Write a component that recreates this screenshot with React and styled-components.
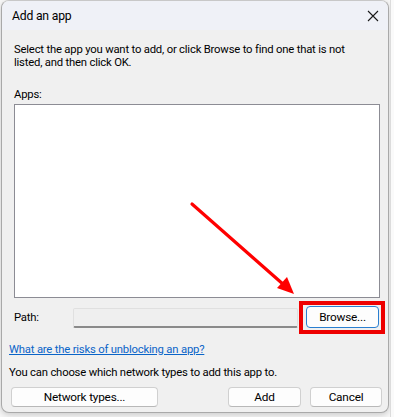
import React from "react";
import styled, { createGlobalStyle } from "styled-components";

const Global = createGlobalStyle`
  html, body { margin: 0; padding: 0; }
  body {
    width: 394px; height: 417px; overflow: hidden;
    background: #f7f7f7;
    font-family: Roboto, "Noto Sans", sans-serif;
    font-size: 11.3px; letter-spacing: -0.2px; color: #000;
  }
`;

const Page = styled.div`
  position: relative;
  width: 394px;
  height: 417px;
  padding-left: 1px;
  box-sizing: border-box;
`;

const Dialog = styled.div`
  width: 388px;
  height: 413px;
  box-sizing: border-box;
  border: 1px solid #a9a9a9;
  border-top-color: #c8c8c8;
  border-radius: 8px;
  background: #f0f0f0;
  box-shadow: 0 2px 6px rgba(0, 0, 0, 0.18);
  display: flex;
  flex-direction: column;
  overflow: hidden;
`;

const TitleBar = styled.div`
  height: 29px;
  flex: none;
  background: #eff1f7;
  display: flex;
  align-items: center;
  justify-content: space-between;
  padding: 0 3px 0 10px;
  font-size: 12.2px;
`;

const Close = styled.div`
  width: 24px;
  height: 24px;
  display: flex;
  align-items: center;
  justify-content: center;
`;

const Body = styled.div`
  display: flex;
  flex-direction: column;
  padding: 13px 0 0 7px;
  white-space: nowrap;
`;

const Intro = styled.div`
  padding-left: 5px;
  line-height: 13px;
`;

const Label = styled.div`
  padding-left: 5px;
  margin-top: ${(p) => p.$mt}px;
  line-height: 14px;
`;

const ListBox = styled.div`
  margin: 2px 0 0 5px;
  width: 366px;
  height: 194px;
  box-sizing: border-box;
  background: #fff;
  border: 1px solid #8c8c94;
`;

const PathRow = styled.div`
  display: flex;
  align-items: center;
  margin-top: 3px;
  padding-left: 5px;
  & > * { flex: none; }
`;

const PathLabel = styled.div`
  width: 59px;
`;

const PathInput = styled.div`
  width: 225px;
  height: 20px;
  box-sizing: border-box;
  background: #efefef;
  border: 1px solid #e0e0e0;
  border-bottom: 2px solid #8a8a8a;
  border-radius: 2px;
`;

const Highlight = styled.div`
  margin-left: 1px;
  border: 4px solid #ee0000;
  padding: 1px 2px 2px 3px;
  display: flex;
`;

const Button = styled.div`
  flex: none;
  width: ${(p) => p.$w}px;
  height: ${(p) => p.$h || 20}px;
  box-sizing: border-box;
  background: #fdfdfd;
  border: 1px solid ${(p) => (p.$primary ? "#2a7fd0" : "#d0d0d0")};
  border-bottom-color: ${(p) => (p.$primary ? "#2a7fd0" : "#b8b8b8")};
  border-radius: 4px;
  display: flex;
  align-items: center;
  justify-content: center;
  font-size: 11.8px;
`;

const Link = styled.a`
  margin-top: 8px;
  color: #0a64c8;
  text-decoration: underline;
  line-height: 16px;
  align-self: flex-start;
`;

const Note = styled.div`
  margin-top: 7px;
  line-height: 16px;
`;

const ButtonRow = styled.div`
  display: flex;
  margin-top: 6px;
  padding: 0 6px 0 2px;
`;

const Spacer = styled.div`
  flex: 1;
`;

const Gap = styled.div`
  width: 9px;
`;

const Arrow = styled.svg`
  position: absolute;
  left: 0;
  top: 0;
  pointer-events: none;
`;

const Edge = styled.div`
  position: absolute;
  right: 0;
  top: 0;
  width: 3px;
  height: 417px;
  background: #fafafa;
  border-left: 1px solid #dcdcdc;
`;

export default function App() {
  return (
    <Page>
      <Global />
      <Edge />
      <Dialog>
        <TitleBar>
          <span>Add an app</span>
          <Close>
            <svg width="12" height="12" viewBox="0 0 12 12">
              <path d="M1 1 L11 11 M11 1 L1 11" stroke="#1a1a1a" strokeWidth="1.1" />
            </svg>
          </Close>
        </TitleBar>
        <Body>
          <Intro>
            Select the app you want to add, or click Browse to find one that is not
            <br />
            listed, and then click OK.
          </Intro>
          <Label $mt={19}>Apps:</Label>
          <ListBox />
          <PathRow>
            <PathLabel>Path:</PathLabel>
            <PathInput />
            <Highlight>
              <Button $w={73} $h={22} $primary>Browse...</Button>
            </Highlight>
          </PathRow>
          <Link href="#">What are the risks of unblocking an app?</Link>
          <Note>You can choose which network types to add this app to.</Note>
          <ButtonRow>
            <Button $w={147}>Network types...</Button>
            <Spacer />
            <Button $w={73}>Add</Button>
            <Gap />
            <Button $w={72}>Cancel</Button>
          </ButtonRow>
        </Body>
      </Dialog>
      <Arrow width="394" height="417" viewBox="0 0 394 417">
        <line x1="192" y1="204" x2="284" y2="285" stroke="#f00" strokeWidth="3.2" strokeLinecap="round" />
        <polygon points="294,294 277,288 287,277" fill="#f00" />
      </Arrow>
    </Page>
  );
}
